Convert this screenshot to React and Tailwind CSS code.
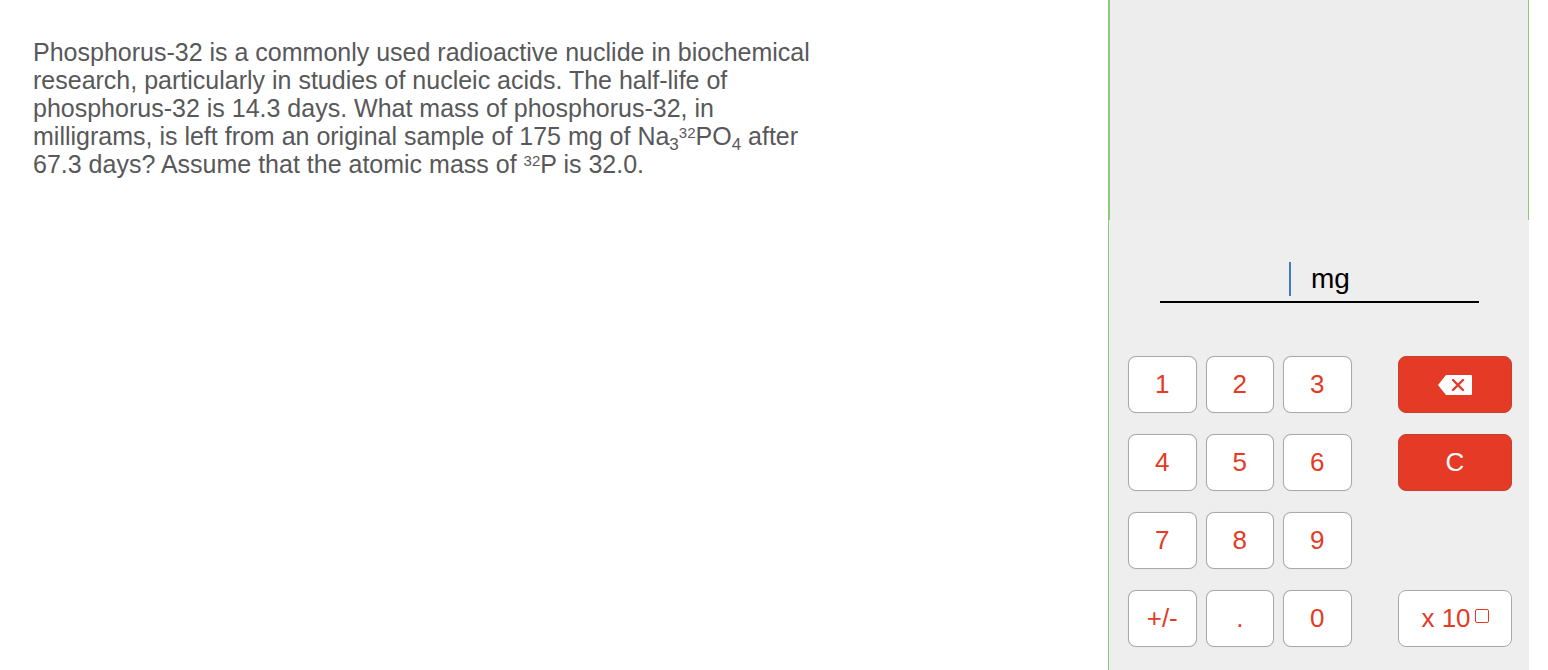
const digitRows = [
  ["1", "2", "3"],
  ["4", "5", "6"],
  ["7", "8", "9"],
  ["+/-", ".", "0"],
];

function KeyButton({ children }) {
  return (
    <button className="flex h-[57px] w-[68.5px] items-center justify-center rounded-lg border border-[#a9a9a9] bg-white text-[26px] text-[#e43a26] shadow-[0_0_1px_rgba(0,0,0,0.15)]">
      {children}
    </button>
  );
}

function BackspaceIcon() {
  return (
    <svg width="36" height="22" viewBox="0 0 36 22">
      <path
        d="M1 11 L9 1 H34 Q35 1 35 2 V20 Q35 21 34 21 H9 Z"
        fill="#ffffff"
      />
      <path
        d="M16 6 L26 16 M26 6 L16 16"
        stroke="#e43a26"
        strokeWidth="2.4"
        strokeLinecap="round"
      />
    </svg>
  );
}

function SideButton({ children, red }) {
  return (
    <button
      className={
        red
          ? "flex h-[57px] w-[114px] items-center justify-center rounded-lg border border-[#c9402f] bg-[#e43a26] text-[26px] text-white"
          : "flex h-[57px] w-[114px] items-center justify-center rounded-lg border border-[#a9a9a9] bg-white text-[26px] text-[#e43a26]"
      }
    >
      {children}
    </button>
  );
}

export default function App() {
  const side = [
    <SideButton red key="bs">
      <BackspaceIcon />
    </SideButton>,
    <SideButton red key="c">
      C
    </SideButton>,
    <div key="empty" className="h-[57px] w-[114px]" />,
    <SideButton key="x10">
      <span>x 10</span>
      <span className="mb-[6px] ml-[4px] inline-block h-[14px] w-[14px] rounded-[2px] border border-[#e43a26]" />
    </SideButton>,
  ];

  return (
    <div
      className="flex h-[670px] w-[1548px] overflow-hidden bg-white"
      style={{ fontFamily: '"Liberation Sans", Arial, sans-serif' }}
    >
      <div className="flex-1 pl-[33px] pt-[38px]">
        <p className="whitespace-nowrap text-[25px] leading-[28px] text-[#58585a]">
          Phosphorus-32 is a commonly used radioactive nuclide in biochemical
          <br />
          research, particularly in studies of nucleic acids. The half-life of
          <br />
          phosphorus-32 is 14.3 days. What mass of phosphorus-32, in
          <br />
          milligrams, is left from an original sample of 175 mg of Na
          <span className="relative top-[5px] text-[17px] leading-none">3</span>
          <span className="relative top-[-7px] text-[15px] leading-none">32</span>
          PO
          <span className="relative top-[5px] text-[17px] leading-none">4</span>{" "}
          after
          <br />
          67.3 days? Assume that the atomic mass of{" "}
          <span className="relative top-[-7px] text-[15px] leading-none">32</span>
          P is 32.0.
        </p>
      </div>

      <div className="mr-[19px] flex w-[421px] flex-col">
        <div className="h-[220px] border-l-2 border-r border-[#8dc97b] bg-[#ededed]" />
        <div className="flex-1 border-l border-[#8dc97b] bg-[#eeeeee] pt-[40px]">
          <div className="ml-[51px] flex h-[43px] w-[319px] items-center justify-center border-b-2 border-black">
            <span className="mb-[4px] h-[34px] w-[2px] bg-[#3f7cc0]" />
            <span className="ml-[20px] mb-[4px] text-[28px] text-black">mg</span>
          </div>

          <div className="ml-[19px] mt-[53px] flex flex-col gap-[21px]">
            {digitRows.map((row, i) => (
              <div key={i} className="flex items-center">
                <div className="flex gap-[9px]">
                  {row.map((d) => (
                    <KeyButton key={d}>{d}</KeyButton>
                  ))}
                </div>
                <div className="ml-[46.5px]">{side[i]}</div>
              </div>
            ))}
          </div>
        </div>
      </div>
    </div>
  );
}
